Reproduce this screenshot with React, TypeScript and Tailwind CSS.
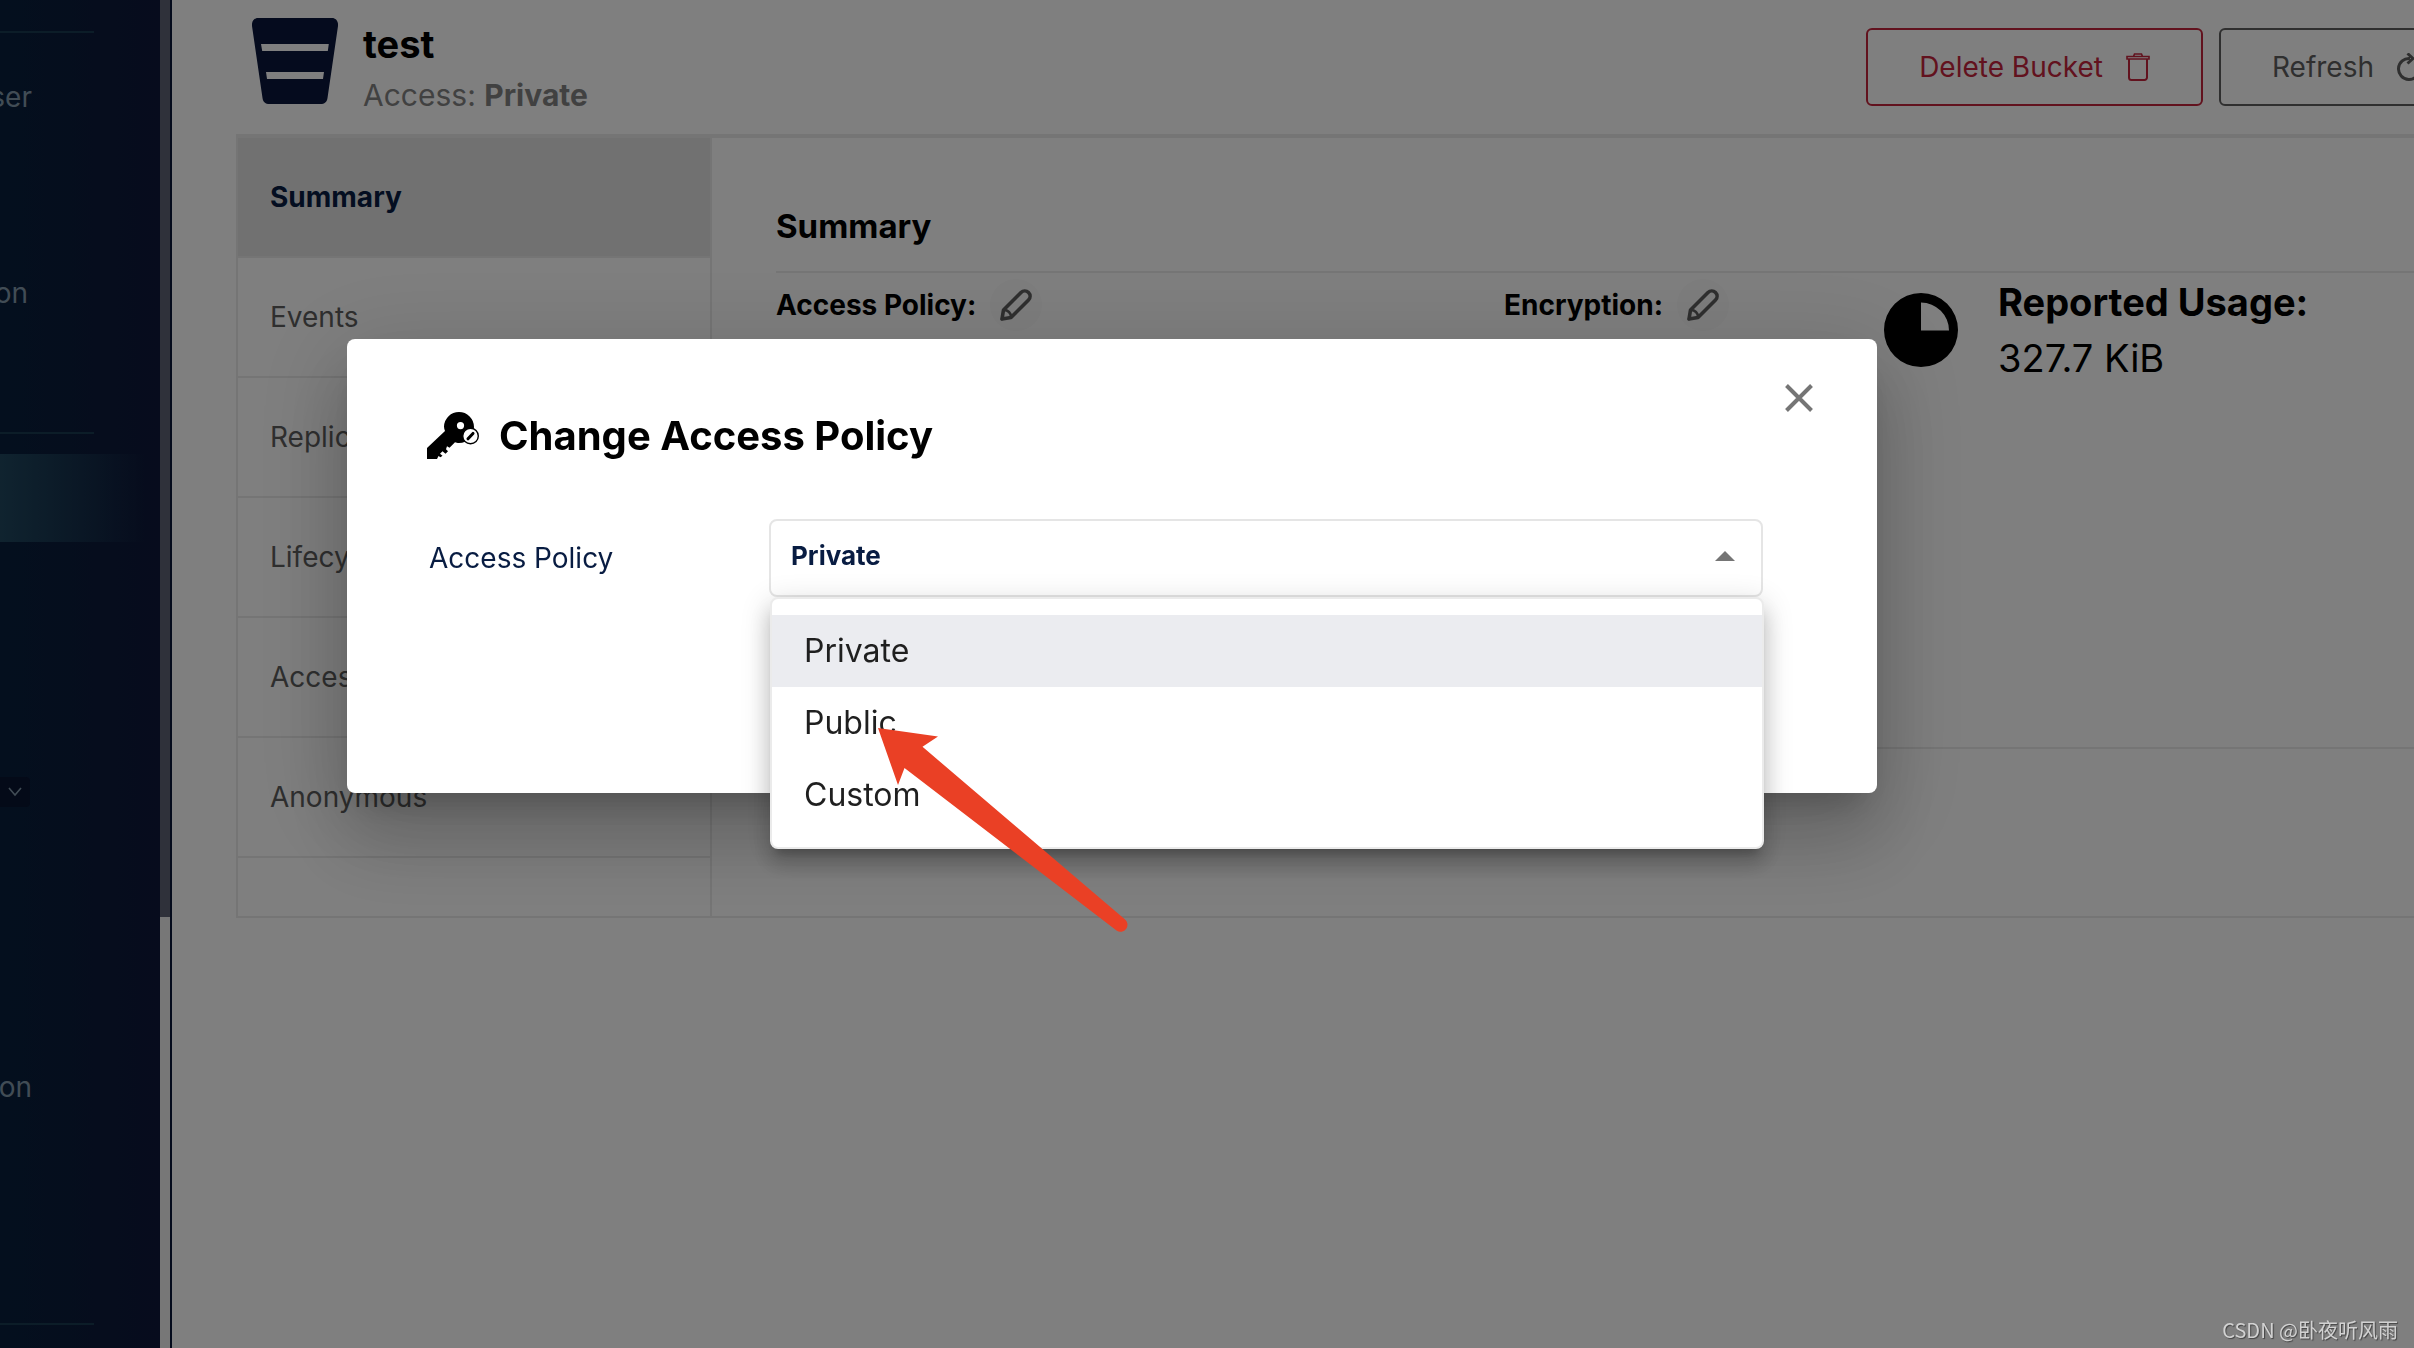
import { useState } from 'react';

const tabs = ['Summary', 'Events', 'Replication', 'Lifecycle', 'Access', 'Anonymous'];

const policies = ['Private', 'Public', 'Custom'];

const BucketIcon = () => (
  <svg width="86" height="86" viewBox="0 0 86 86" fill="#0a163c" aria-hidden="true">
    <path
      fillRule="evenodd"
      d="M6 0h74c4 0 6.500 3.500 6 8l-10.500 72c-.6 4-3 6-7 6h-51c-4 0-6.400-2-7-6L0 8C-.5 3.500 2 0 6 0zM9 26l1.200 7h65.600l1-7zM14 54l1 7h56l1-7z"
    />
  </svg>
);

const KeyIcon = () => (
  <svg width="52" height="48" viewBox="0 0 52 48" aria-hidden="true">
    <path
      fillRule="evenodd"
      d="M32 0a15 15 0 0 1 15 15c0 9-6 16-15 16-1.500 0-3-.3-4-.8l-5.500 5.500-2.500-1.500-1 3 2 2-2.500 2.500-3-2.500-2.500 2.500 2.500 2-2 1.600-2-1.300-1.500 3H0V36l18-17c-.6-1.400-1-3-1-4.500A15 15 0 0 1 32 0zm1.500 10a3.600 3.600 0 1 0 0 7.200 3.600 3.600 0 0 0 0-7.200z"
    />
    <circle cx="43.500" cy="24" r="7.800" fill="#fff" stroke="#000" strokeWidth="1.400" />
    <path d="M41 26.800l5-5.400" stroke="#000" strokeWidth="3" strokeLinecap="round" />
  </svg>
);

const PencilIcon = () => (
  <svg width="32" height="32" viewBox="0 0 32 32" fill="none" stroke="#5e5e5e" strokeWidth="3.600" strokeLinejoin="round" aria-hidden="true">
    <path d="M2 30l1.500-9L21 3.500a5 5 0 0 1 7.500 7.500L11 28.500z" />
    <path d="M4 21c4 0 7 3 7 7" strokeWidth="2.500" />
    <path d="M1 31l1-5 4 4z" fill="#5e5e5e" strokeWidth="1" />
  </svg>
);

const TrashIcon = () => (
  <svg width="24" height="28" viewBox="0 0 24 28" fill="none" stroke="currentColor" strokeWidth="2" aria-hidden="true">
    <path d="M1 6V3.500h22V6zM7.500 3.500l1-2.500h7l1 2.500" strokeWidth="1.600" />
    <path d="M3 6v18.500A2.500 2.500 0 0 0 5.500 27h13a2.500 2.500 0 0 0 2.500-2.500V6" />
  </svg>
);

const RefreshIcon = () => (
  <svg width="24" height="28" viewBox="0 0 24 28" fill="none" stroke="currentColor" strokeWidth="3" aria-hidden="true">
    <path d="M13 5.500A10.500 10.500 0 1 0 22.500 16" />
    <path d="M10.500 0.500l5.500 5-5.500 5" />
  </svg>
);

const UsageIcon = () => (
  <svg width="74" height="74" viewBox="0 0 74 74" aria-hidden="true">
    <path fillRule="evenodd" d="M37 0a37 37 0 1 0 0 74 37 37 0 0 0 0-74zm0 9.500A28 28 0 0 1 65 37.500H37z" />
  </svg>
);

const EditButton = ({ label }: { label: string }) => (
  <button aria-label={label} className="flex h-[52px] w-[52px] items-center justify-center rounded-full bg-[#fafafa]">
    <PencilIcon />
  </button>
);

const Sidebar = () => (
  <aside className="flex w-[172px] shrink-0 border-r-2 border-[#081638] bg-[#0e183c]">
    <nav className="flex w-40 flex-col bg-linear-to-r from-[#081f3c] to-[#0e183a] pt-[31px] text-[28px] text-[#8399ab]">
      <hr className="w-[94px] border-t-2 border-[#183a50]" />
      <a href="#browser" className="mt-5 flex h-[88px] w-8 items-center justify-end">ser</a>
      <a href="#documentation" className="mt-[108px] flex h-[88px] w-7 items-center justify-end">on</a>
      <hr className="mt-[95px] w-[94px] border-t-2 border-[#183a50]" />
      <a
        href="#buckets"
        aria-label="Buckets"
        className="mt-5 block h-[88px] bg-linear-to-r from-[#20475f] to-transparent to-90%"
      />
      <button
        aria-label="Expand"
        className="mt-[235px] flex h-[30px] w-[30px] items-center justify-center rounded-r bg-[#081430]"
      >
        <svg width="14" height="10" viewBox="0 0 14 10" fill="none" stroke="currentColor" strokeWidth="1.600">
          <path d="M1 1l6 7 6-7" />
        </svg>
      </button>
      <a href="#configuration" className="mt-[236px] flex h-[88px] w-8 items-center justify-end">on</a>
      <hr className="mt-[192px] w-[94px] border-t-2 border-[#183a50]" />
    </nav>
    <div className="w-[10px] bg-[#efefef]">
      <div className="h-[68%] bg-[#5e6274]" />
    </div>
  </aside>
);

const Header = () => (
  <header className="flex h-[138px] items-start border-b-4 border-[#eaeaea]">
    <div className="flex flex-1 gap-[25px] pt-[18px] pl-4">
      <BucketIcon />
      <div>
        <h1 className="text-[38px] leading-[52px] font-bold">test</h1>
        <p className="text-[30px] leading-[50px] text-[#838383]">
          Access: <strong>Private</strong>
        </p>
      </div>
    </div>
    <div className="flex gap-4 pt-7 text-[28px]">
      <button className="flex h-[78px] items-center gap-[23px] rounded-md border-2 border-[#c5253c] px-[51px] text-[#c5253c]">
        Delete Bucket
        <TrashIcon />
      </button>
      <button className="flex h-[78px] items-center gap-[23px] rounded-md border-2 border-[#5e5e5e] px-[51px] text-[#5e5e5e]">
        Refresh
        <RefreshIcon />
      </button>
    </div>
  </header>
);

const BucketDetails = () => (
  <section className="flex h-[780px] border-b-2 border-l-2 border-[#eaeaea]">
    <ul className="w-[474px] shrink-0 border-r-2 border-[#eaeaea] text-[28px]">
      {tabs.map((tab, index) => (
        <li key={tab} className="border-b-2 border-[#eaeaea]">
          <a
            href={`#${tab}`}
            className={`flex h-[118px] items-center pl-8 ${
              index === 0 ? 'bg-[#e3e3e3] font-bold text-[#081c42]' : 'text-[#5e5e5e]'
            }`}
          >
            {tab}
          </a>
        </li>
      ))}
    </ul>
    <div className="flex-1 pt-16 pl-16">
      <h2 className="border-b-2 border-[#eaeaea] pb-[21px] text-[33px] leading-[48px] font-bold">Summary</h2>
      <div className="flex h-[476px] border-b-2 border-[#eaeaea] pt-[6px]">
        <div className="flex flex-1 items-start text-[28px] font-bold">
          <div className="flex w-[728px] items-center gap-[14px]">
            Access Policy:
            <EditButton label="Edit access policy" />
          </div>
          <div className="flex items-center gap-[14px]">
            Encryption:
            <EditButton label="Edit encryption" />
          </div>
        </div>
        <div className="flex w-[590px] items-start gap-10 text-[38px] leading-[56px]">
          <div className="pt-[14px]">
            <UsageIcon />
          </div>
          <div className="-mt-[5px]">
            <h3 className="font-bold">Reported Usage:</h3>
            <p>327.7 KiB</p>
          </div>
        </div>
      </div>
    </div>
  </section>
);

const AccessPolicyModal = () => {
  const [policy, setPolicy] = useState('Private');

  return (
    <div className="fixed inset-0 bg-black/50 pt-[339px] pr-[537px] pl-[347px]">
      <div
        role="dialog"
        aria-labelledby="modal-title"
        className="rounded-lg bg-white pr-16 pb-[196px] pl-20 shadow-[0_22px_30px_-14px_rgba(0,0,0,0.2),0_48px_76px_6px_rgba(0,0,0,0.14),0_18px_92px_16px_rgba(0,0,0,0.12)]"
      >
        <div className="flex items-start justify-between pt-[45px]">
          <div className="flex items-center gap-5 pt-6">
            <KeyIcon />
            <h2 id="modal-title" className="text-[40px] leading-[56px] font-bold">Change Access Policy</h2>
          </div>
          <button aria-label="Close">
            <svg width="28" height="28" viewBox="0 0 28 28" stroke="#757575" strokeWidth="4">
              <path d="M1.500 1.500l25 25M26.500 1.500l-25 25" />
            </svg>
          </button>
        </div>
        <div className="flex items-center pt-[55px] pr-[50px]">
          <label htmlFor="policy" className="w-[342px] pl-0.5 text-[28px] text-[#081c42]">
            Access Policy
          </label>
          <div className="relative flex-1">
            <select
              id="policy"
              value={policy}
              onChange={(e) => setPolicy(e.target.value)}
              className="block h-[78px] w-full appearance-none rounded-lg border-2 border-[#e5e5e5] bg-white pb-1.5 pl-5 text-[26px] font-bold text-[#081c42]"
            >
              {policies.map((item) => (
                <option key={item}>{item}</option>
              ))}
            </select>
            <svg className="absolute top-8 right-7" width="20" height="10" viewBox="0 0 20 10" fill="#757575">
              <path d="M0 10L10 0l10 10z" />
            </svg>
            <ul className="absolute top-full -right-px left-px rounded-lg border-2 border-[#ebebeb] bg-white py-4 text-[32px] text-[#1f1f1f] shadow-[0_10px_10px_-6px_rgba(0,0,0,0.2),0_16px_20px_2px_rgba(0,0,0,0.14),0_6px_28px_4px_rgba(0,0,0,0.12)]">
              {policies.map((item) => (
                <li key={item}>
                  <button
                    onClick={() => setPolicy(item)}
                    className={`flex h-[72px] w-full items-center pl-8 ${item === policy ? 'bg-[#ebecf0]' : ''}`}
                  >
                    {item}
                  </button>
                </li>
              ))}
            </ul>
            <svg className="absolute top-[209px] left-[109px]" width="252" height="206" viewBox="0 0 252 206" fill="#ea4025" aria-hidden="true">
              <path d="M0 0l60 8.500-15.500 10.300L246.500 191a6.500 6.500 0 0 1-8 11.500L26.500 40 20 57z" />
            </svg>
          </div>
        </div>
      </div>
    </div>
  );
};

const App = () => (
  <div className="flex min-h-screen overflow-hidden bg-white font-['Inter',sans-serif] text-black">
    <Sidebar />
    <main className="-mr-[60px] flex-1 pl-16">
      <Header />
      <BucketDetails />
    </main>
    <AccessPolicyModal />
    <p className="fixed right-4 bottom-1 font-['Noto_Sans_CJK_SC',sans-serif] text-xl text-[#d2d2d2] [text-shadow:1px_1px_1px_#444]">
      CSDN @卧夜听风雨
    </p>
  </div>
);

export default App;
